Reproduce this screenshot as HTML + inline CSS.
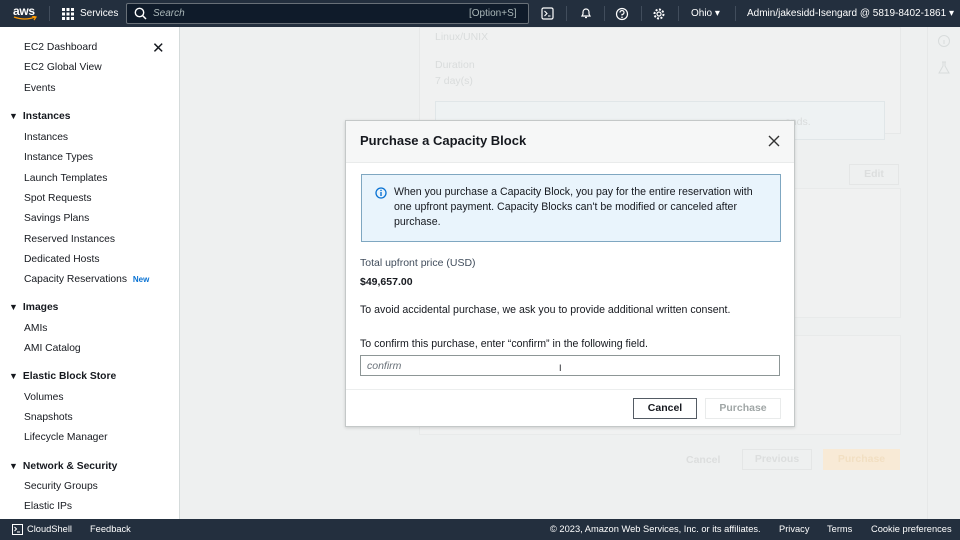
<!DOCTYPE html>
<html><head><meta charset="utf-8"><style>
*{box-sizing:border-box;margin:0;padding:0}
body{width:960px;height:540px;overflow:hidden;position:relative;font-family:"Liberation Sans",sans-serif;background:#eef0f0;font-size:10.5px;color:#16191f}
.a{position:absolute}
.top{left:0;top:0;width:960px;height:27px;background:#232f3e;color:#fff}
.side{left:0;top:27px;width:180px;height:492px;background:#fff;border-right:1px solid #d5dbdb}
.side div{position:absolute;font-size:10.3px;color:#16191f}
.side .h{font-weight:bold}
.side .h span{font-size:9px;margin-right:5px}
.foot{left:0;top:519px;width:960px;height:21px;background:#232f3e;color:#fff;font-size:9.3px}
.fade{color:#d9dcdc}
.modal{left:345px;top:120px;width:450px;height:307px;background:#fff;border:1px solid #c4c8c8;box-shadow:0 1px 3px rgba(0,0,0,.15)}
</style></head><body>
<div class="a top">
  <div class="a" style="left:13px;top:4px;font-size:12px;font-weight:bold;letter-spacing:-.3px">aws</div>
  <svg class="a" style="left:13px;top:16px" width="24" height="5"><path d="M1 1 Q12 5 22 1 M19 0 L23 1 L21 4" stroke="#f90" stroke-width="1.3" fill="none"/></svg>
  <div class="a" style="left:49px;top:6px;width:1px;height:15px;background:#414d5c"></div>
  <svg class="a" style="left:62px;top:8px" width="12" height="12" fill="#fff"><rect x="0" y="0" width="3" height="3"/><rect x="4.5" y="0" width="3" height="3"/><rect x="9" y="0" width="3" height="3"/><rect x="0" y="4.5" width="3" height="3"/><rect x="4.5" y="4.5" width="3" height="3"/><rect x="9" y="4.5" width="3" height="3"/><rect x="0" y="9" width="3" height="3"/><rect x="4.5" y="9" width="3" height="3"/><rect x="9" y="9" width="3" height="3"/></svg>
  <div class="a" style="left:80px;top:8px;font-size:10px">Services</div>
  <div class="a" style="left:126px;top:3px;width:403px;height:21px;background:#0f1b2a;border:1px solid #687078;border-radius:2px"></div>
  <svg class="a" style="left:134px;top:7px" width="13" height="13"><circle cx="5.5" cy="5.5" r="4.2" stroke="#fff" stroke-width="1.4" fill="none"/><path d="M8.5 8.5 L12 12" stroke="#fff" stroke-width="1.5"/></svg>
  <div class="a" style="left:153px;top:8px;font-style:italic;color:#aab7b8;font-size:10px">Search</div>
  <div class="a" style="left:469px;top:8px;color:#aab7b8;font-size:10px">[Option+S]</div>
  <svg class="a" style="left:541px;top:7px" width="13" height="13"><rect x="1" y="1" width="11" height="11" rx="1.5" stroke="#fff" stroke-width="1.2" fill="none"/><path d="M3.5 4 L6 6.5 L3.5 9 M7 9 H9.5" stroke="#fff" stroke-width="1.1" fill="none"/></svg>
  <div class="a" style="left:566px;top:6px;width:1px;height:15px;background:#414d5c"></div>
  <svg class="a" style="left:579px;top:6px" width="14" height="14"><path d="M3 10 L4 8 V6 A3 3 0 0 1 10 6 V8 L11 10 Z M6 11.5 H8" stroke="#fff" stroke-width="1.2" fill="none"/></svg>
  <div class="a" style="left:604px;top:6px;width:1px;height:15px;background:#414d5c"></div>
  <svg class="a" style="left:615px;top:7px" width="14" height="14"><circle cx="7" cy="7" r="5.5" stroke="#fff" stroke-width="1.2" fill="none"/><path d="M5 5.5 A2 2 0 1 1 7 7.5 V8.5" stroke="#fff" stroke-width="1.2" fill="none"/><circle cx="7" cy="10.3" r=".8" fill="#fff"/></svg>
  <div class="a" style="left:641px;top:6px;width:1px;height:15px;background:#414d5c"></div>
  <svg class="a" style="left:652px;top:7px" width="14" height="14"><circle cx="7" cy="7" r="4.5" stroke="#fff" stroke-width="2" stroke-dasharray="2 1.5" fill="none"/><circle cx="7" cy="7" r="2" stroke="#fff" stroke-width="1.2" fill="none"/></svg>
  <div class="a" style="left:678px;top:6px;width:1px;height:15px;background:#414d5c"></div>
  <div class="a" style="left:691px;top:8px;font-size:10px">Ohio ▾</div>
  <div class="a" style="left:735px;top:6px;width:1px;height:15px;background:#414d5c"></div>
  <div class="a" style="left:747px;top:8px;font-size:10px">Admin/jakesidd-Isengard @ 5819-8402-1861 ▾</div>
</div>
<div class="a side">
  <div style="left:24px;top:15px">EC2 Dashboard</div>
  <div style="left:152px;top:12px;font-size:15px">✕</div>
  <div style="left:24px;top:35px">EC2 Global View</div>
  <div style="left:24px;top:56px">Events</div>
  <div class="h" style="left:9px;top:84px"><span>▼</span>Instances</div>
  <div style="left:24px;top:105px">Instances</div>
  <div style="left:24px;top:125px">Instance Types</div>
  <div style="left:24px;top:146px">Launch Templates</div>
  <div style="left:24px;top:166px">Spot Requests</div>
  <div style="left:24px;top:186px">Savings Plans</div>
  <div style="left:24px;top:207px">Reserved Instances</div>
  <div style="left:24px;top:227px">Dedicated Hosts</div>
  <div style="left:24px;top:247px">Capacity Reservations <b style="color:#0972d3;font-size:8px;margin-left:3px">New</b></div>
  <div class="h" style="left:9px;top:275px"><span>▼</span>Images</div>
  <div style="left:24px;top:296px">AMIs</div>
  <div style="left:24px;top:316px">AMI Catalog</div>
  <div class="h" style="left:9px;top:344px"><span>▼</span>Elastic Block Store</div>
  <div style="left:24px;top:365px">Volumes</div>
  <div style="left:24px;top:385px">Snapshots</div>
  <div style="left:24px;top:405px">Lifecycle Manager</div>
  <div class="h" style="left:9px;top:434px"><span>▼</span>Network &amp; Security</div>
  <div style="left:24px;top:454px">Security Groups</div>
  <div style="left:24px;top:474px">Elastic IPs</div>
</div>
<div class="a" style="left:419px;top:27px;width:482px;height:107px;background:#f0f1f1;border:1px solid #e6e8e8"></div>
<div class="a fade" style="left:435px;top:31px">Linux/UNIX</div>
<div class="a fade" style="left:435px;top:59px">Duration</div>
<div class="a fade" style="left:435px;top:75px">7 day(s)</div>
<div class="a" style="left:435px;top:101px;width:450px;height:39px;border:1px solid #e0e6e8;background:#eef2f3"></div>
<div class="a fade" style="left:785px;top:116px">ends.</div>
<div class="a" style="left:849px;top:164px;width:50px;height:21px;border:1px solid #e4e6e6;color:#dcdede;font-weight:bold;text-align:center;line-height:19px">Edit</div>
<div class="a" style="left:419px;top:188px;width:482px;height:130px;border:1px solid #e8eaea;background:#f0f1f1"></div>
<div class="a" style="left:419px;top:335px;width:482px;height:100px;border:1px solid #e8eaea;background:#f0f1f1"></div>
<div class="a" style="left:686px;top:454px;color:#dcdede;font-weight:bold">Cancel</div>
<div class="a" style="left:742px;top:449px;width:70px;height:21px;border:1px solid #e4e6e6;color:#dcdede;font-weight:bold;text-align:center;line-height:19px">Previous</div>
<div class="a" style="left:823px;top:449px;width:77px;height:21px;background:#f8ead6;color:#f2dfc2;font-weight:bold;text-align:center;line-height:21px">Purchase</div>
<div class="a" style="left:927px;top:27px;width:1px;height:492px;background:#e6e8e8"></div>
<svg class="a" style="left:937px;top:34px" width="14" height="14"><circle cx="7" cy="7" r="5.5" stroke="#d8dcdc" fill="none"/><path d="M7 6 V10" stroke="#d8dcdc"/></svg>
<svg class="a" style="left:937px;top:61px" width="14" height="14"><path d="M5 1 H9 M6 1 V5 L2 12 H12 L8 5 V1" stroke="#d8dcdc" fill="none"/></svg>

<div class="a modal">
  <div class="a" style="left:0;top:0;width:448px;height:42px;background:#f6f7f7;border-bottom:1px solid #e9ebeb"></div>
  <div class="a" style="left:14px;top:12px;font-size:13px;font-weight:bold">Purchase a Capacity Block</div>
  <svg class="a" style="left:422px;top:14px" width="12" height="12"><path d="M1 1 L11 11 M11 1 L1 11" stroke="#333" stroke-width="1.4"/></svg>
  <div class="a" style="left:15px;top:53px;width:420px;height:68px;background:#e9f4fc;border:1px solid #7fa7c1"></div>
  <svg class="a" style="left:29px;top:66px" width="12" height="12"><circle cx="6" cy="6" r="5" stroke="#0972d3" stroke-width="1.3" fill="none"/><path d="M6 5 V9" stroke="#0972d3" stroke-width="1.4"/><circle cx="6" cy="3.4" r=".8" fill="#0972d3"/></svg>
  <div class="a" style="left:48px;top:64px;width:372px;line-height:15px;font-size:10.6px">When you purchase a Capacity Block, you pay for the entire reservation with one upfront payment. Capacity Blocks can't be modified or canceled after purchase.</div>
  <div class="a" style="left:14px;top:136px;color:#414d5c">Total upfront price (USD)</div>
  <div class="a" style="left:14px;top:155px;font-weight:bold">$49,657.00</div>
  <div class="a" style="left:14px;top:183px;font-size:10.6px">To avoid accidental purchase, we ask you to provide additional written consent.</div>
  <div class="a" style="left:14px;top:217px;font-size:10.6px">To confirm this purchase, enter “confirm” in the following field.</div>
  <div class="a" style="left:14px;top:234px;width:420px;height:21px;border:1px solid #8d9696"></div>
  <div class="a" style="left:21px;top:239px;font-style:italic;color:#687078">confirm</div>
  <div class="a" style="left:213px;top:242px;font-size:9px">I</div>
  <div class="a" style="left:0;top:268px;width:448px;height:1px;background:#eceeee"></div>
  <div class="a" style="left:287px;top:277px;width:64px;height:21px;border:1px solid #545b64;font-weight:bold;text-align:center;line-height:19px;color:#16191f">Cancel</div>
  <div class="a" style="left:359px;top:277px;width:76px;height:21px;border:1px solid #e9ebeb;font-weight:bold;text-align:center;line-height:19px;color:#a0a6a6">Purchase</div>
</div>

<div class="a foot">
  <svg class="a" style="left:12px;top:5px" width="11" height="11"><rect x=".5" y=".5" width="10" height="10" stroke="#fff" fill="none"/><path d="M2.5 3 L4.5 5 L2.5 7 M5 8 H8" stroke="#fff" fill="none"/></svg>
  <div class="a" style="left:27px;top:5px">CloudShell</div>
  <div class="a" style="left:90px;top:5px">Feedback</div>
  <div class="a" style="left:550px;top:5px">© 2023, Amazon Web Services, Inc. or its affiliates.</div>
  <div class="a" style="left:779px;top:5px">Privacy</div>
  <div class="a" style="left:827px;top:5px">Terms</div>
  <div class="a" style="left:871px;top:5px">Cookie preferences</div>
</div>
</body></html>
